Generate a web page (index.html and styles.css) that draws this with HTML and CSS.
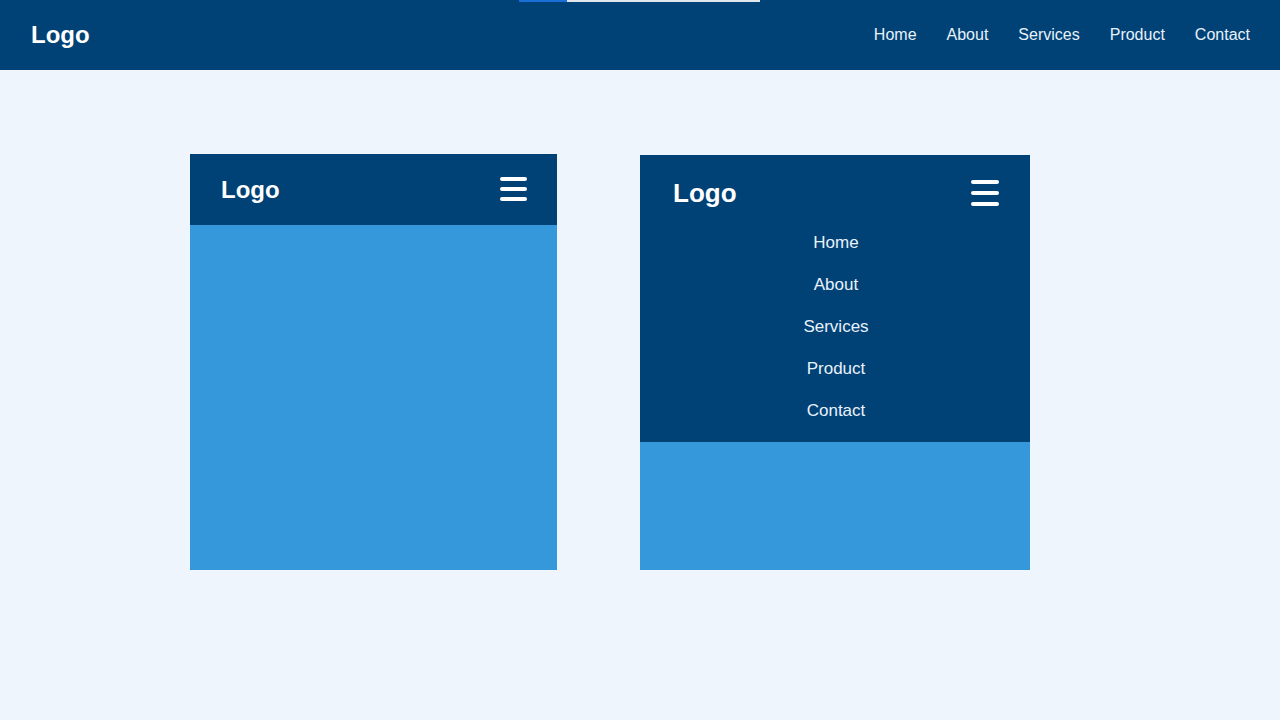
FILE: index.html
```html
<!DOCTYPE html>
<html lang="en">
<head>
<meta charset="utf-8">
<title>Responsive Navbar</title>
<link rel="stylesheet" href="styles.css">
</head>
<body>
<div class="progress"><span class="progress-fill"></span></div>
<header class="topbar">
  <div class="brand">Logo</div>
  <nav class="topnav">
    <a href="#">Home</a>
    <a href="#">About</a>
    <a href="#">Services</a>
    <a href="#">Product</a>
    <a href="#">Contact</a>
  </nav>
</header>
<main class="stage">
  <section class="card card-closed">
    <div class="card-head">
      <div class="card-logo">Logo</div>
      <div class="burger"><span></span><span></span><span></span></div>
    </div>
    <div class="card-body"></div>
  </section>
  <section class="card card-open">
    <div class="card-dark">
      <div class="card-head2">
        <div class="card-logo2">Logo</div>
        <div class="burger2"><span></span><span></span><span></span></div>
      </div>
      <ul class="menu">
        <li>Home</li>
        <li>About</li>
        <li>Services</li>
        <li>Product</li>
        <li>Contact</li>
      </ul>
    </div>
    <div class="card-body2"></div>
  </section>
</main>
</body>
</html>
```
FILE: styles.css
```css
* { box-sizing: border-box; }
html, body { margin: 0; padding: 0; }
body {
  background: #eef5fd;
  font-family: "Liberation Sans", Arial, sans-serif;
  width: 1280px;
  height: 720px;
  overflow: hidden;
  position: relative;
}
.progress {
  position: absolute;
  top: 0;
  left: 519px;
  width: 241px;
  height: 2px;
  background: #dfe6ee;
  z-index: 5;
}
.progress-fill {
  display: block;
  width: 48px;
  height: 2px;
  background: #1a6fd6;
}
.topbar {
  height: 70px;
  background: #004275;
  display: flex;
  align-items: center;
  justify-content: space-between;
  padding: 0 30px 0 31px;
}
.brand {
  color: #ffffff;
  font-weight: bold;
  font-size: 24px;
  line-height: 28px;
}
.topnav {
  display: flex;
  gap: 30px;
}
.topnav a {
  color: #e9f1fb;
  text-decoration: none;
  font-size: 16px;
  line-height: 20px;
}
.stage {
  display: flex;
  align-items: flex-start;
  gap: 83px;
  padding: 84px 0 0 190px;
}
.card-closed {
  width: 367px;
  height: 416px;
  display: flex;
  flex-direction: column;
}
.card-head {
  height: 71px;
  background: #004275;
  display: flex;
  align-items: center;
  justify-content: space-between;
  padding: 0 30px 0 31px;
}
.card-logo {
  color: #ffffff;
  font-weight: bold;
  font-size: 24px;
  line-height: 28px;
}
.burger {
  display: flex;
  flex-direction: column;
  gap: 6px;
  width: 27px;
  margin-top: -2px;
}
.burger span {
  display: block;
  height: 4px;
  background: #ffffff;
  border-radius: 2px;
}
.card-body {
  flex: 1;
  background: #3598db;
}
.card-open {
  width: 390px;
  height: 415px;
  margin-top: 1px;
  display: flex;
  flex-direction: column;
}
.card-dark {
  background: #004275;
  padding-bottom: 10px;
}
.card-head2 {
  display: flex;
  align-items: center;
  justify-content: space-between;
  padding: 23px 30px 12px 33px;
}
.card-logo2 {
  color: #ffffff;
  font-weight: bold;
  font-size: 26px;
  line-height: 30px;
}
.burger2 {
  display: flex;
  flex-direction: column;
  gap: 7px;
  width: 28px;
  margin-right: 1px;
}
.burger2 span {
  display: block;
  height: 4px;
  background: #ffffff;
  border-radius: 2px;
}
.menu {
  list-style: none;
  margin: 0;
  padding: 2px 0 0 2px;
}
.menu li {
  height: 42px;
  line-height: 42px;
  text-align: center;
  color: #e9f1fb;
  font-size: 17px;
}
.card-body2 {
  flex: 1;
  background: #3598db;
}
```
